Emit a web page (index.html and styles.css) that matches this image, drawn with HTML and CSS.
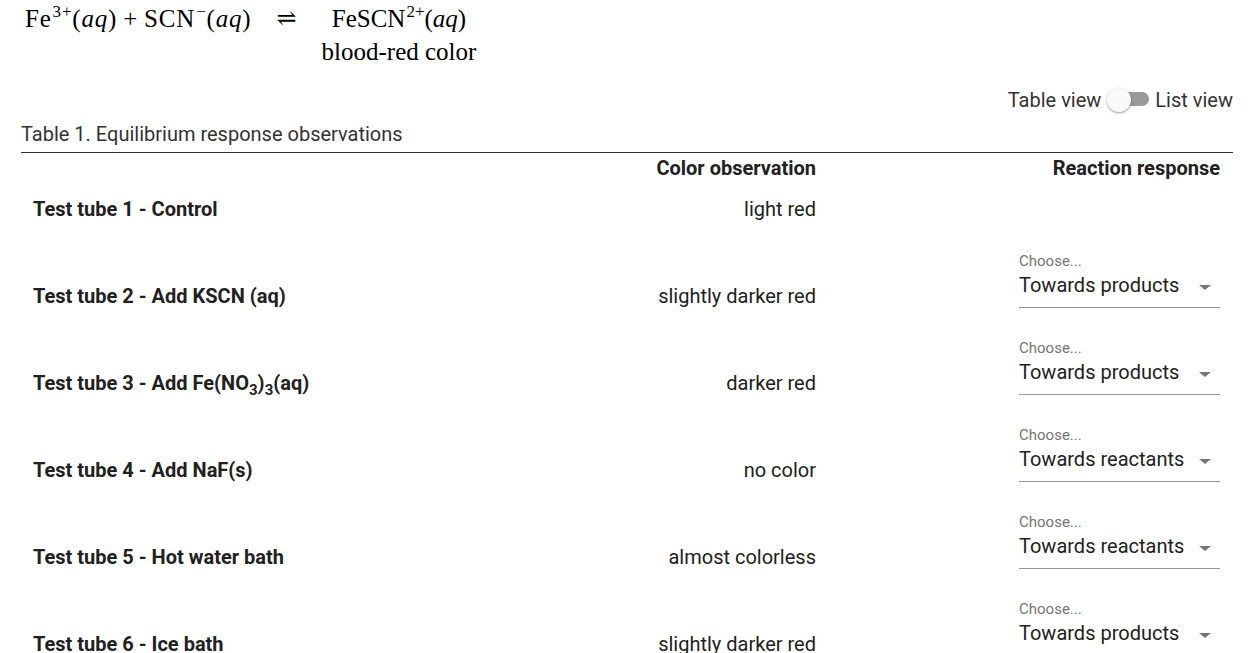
FILE: index.html
```html
<!DOCTYPE html>
<html lang="en">
<head>
<meta charset="utf-8">
<title>Equilibrium response observations</title>
<link rel="stylesheet" href="styles.css">
</head>
<body>
<div class="page">
  <div class="equation">
    <div class="eq-left">Fe<sup>3+</sup>(<i>aq</i>)<span class="op">+</span>SCN<sup>−</sup>(<i>aq</i>)</div>
    <div class="eq-arrow">⇌</div>
    <div class="eq-right">FeSCN<sup>2+</sup>(<i>aq</i>)</div>
    <div></div>
    <div></div>
    <div class="eq-right">blood-red color</div>
  </div>

  <div class="view-toggle">
    <span>Table view</span>
    <span class="switch"><span class="track"></span><span class="thumb"></span></span>
    <span>List view</span>
  </div>

  <div class="caption">Table 1. Equilibrium response observations</div>

  <div class="table">
    <div class="row head">
      <div class="cell"></div>
      <div class="cell num">Color observation</div>
      <div class="cell num">Reaction response</div>
    </div>
    <div class="row first">
      <div class="cell label">Test tube 1 - Control</div>
      <div class="cell num">light red</div>
      <div class="cell"></div>
    </div>
    <div class="row">
      <div class="cell label">Test tube 2 - Add KSCN (aq)</div>
      <div class="cell num">slightly darker red</div>
      <div class="cell sel-cell">
        <div class="select"><div class="sel-label">Choose...</div><div class="sel-value">Towards products<span class="caret"></span></div></div>
      </div>
    </div>
    <div class="row">
      <div class="cell label">Test tube 3 - Add Fe(NO<sub>3</sub>)<sub>3</sub>(aq)</div>
      <div class="cell num">darker red</div>
      <div class="cell sel-cell">
        <div class="select"><div class="sel-label">Choose...</div><div class="sel-value">Towards products<span class="caret"></span></div></div>
      </div>
    </div>
    <div class="row">
      <div class="cell label">Test tube 4 - Add NaF(s)</div>
      <div class="cell num">no color</div>
      <div class="cell sel-cell">
        <div class="select"><div class="sel-label">Choose...</div><div class="sel-value">Towards reactants<span class="caret"></span></div></div>
      </div>
    </div>
    <div class="row">
      <div class="cell label">Test tube 5 - Hot water bath</div>
      <div class="cell num">almost colorless</div>
      <div class="cell sel-cell">
        <div class="select"><div class="sel-label">Choose...</div><div class="sel-value">Towards reactants<span class="caret"></span></div></div>
      </div>
    </div>
    <div class="row">
      <div class="cell label">Test tube 6 - Ice bath</div>
      <div class="cell num">slightly darker red</div>
      <div class="cell sel-cell">
        <div class="select"><div class="sel-label">Choose...</div><div class="sel-value">Towards products<span class="caret"></span></div></div>
      </div>
    </div>
  </div>
</div>
</body>
</html>
```
FILE: styles.css
```css
html, body {
  margin: 0;
  background: #fff;
}
body {
  font-family: Roboto, "Liberation Sans", sans-serif;
  color: #212121;
  font-size: 20px;
  overflow: hidden;
}
.page {
  padding: 0 18px 0 21px;
}

/* equation */
.equation {
  display: grid;
  grid-template-columns: auto auto auto;
  justify-content: start;
  column-gap: 25px;
  font-family: "Liberation Serif", "DejaVu Serif", serif;
  font-size: 25px;
  line-height: 33px;
  padding: 2px 0 0 4px;
  color: #000;
}
.equation sup {
  font-size: 17px;
  vertical-align: 10px;
  line-height: 0;
  margin-left: 1px;
}
.equation i { font-style: italic; }
.eq-left { letter-spacing: 0.8px; }
.eq-left .op { margin: 0 6px; }
.eq-right { text-align: center; }
.eq-arrow { font-family: "DejaVu Serif", serif; font-size: 24px; }

/* toggle */
.view-toggle {
  display: flex;
  justify-content: flex-end;
  align-items: center;
  margin-top: 18px;
  height: 28px;
  color: #333;
}
.switch {
  position: relative;
  width: 42px;
  height: 24px;
  margin: 0 6px;
}
.track {
  position: absolute;
  left: 1px;
  top: 4px;
  width: 41px;
  height: 14px;
  border-radius: 7px;
  background: #9a9a9a;
}
.thumb {
  position: absolute;
  left: 0;
  top: 0;
  width: 24px;
  height: 24px;
  border-radius: 50%;
  background: #fafafa;
  box-shadow: 0 1px 3px rgba(0,0,0,0.3), 0 1px 1px rgba(0,0,0,0.14);
}

/* caption */
.caption {
  font-size: 20px;
  color: #333;
  margin-top: 8px;
  padding-bottom: 6px;
  border-bottom: 1px solid #333;
  line-height: 24px;
}

/* table */
.row {
  display: grid;
  grid-template-columns: 1fr 229px 404px;
  align-items: end;
  height: 87px;
  box-sizing: border-box;
  padding-bottom: 12px;
}
.row.head {
  height: auto;
  padding: 3px 0 0;
  font-weight: 700;
}
.row.first {
  height: 53px;
}
.cell {
  padding: 0 13px 0 12px;
  line-height: 24px;
}
.cell.num { text-align: right; }
.label { font-weight: 700; }
.label sub {
  font-size: 15px;
  line-height: 0;
  vertical-align: -5px;
}
.sel-cell {
  display: flex;
  justify-content: flex-end;
}
.select {
  width: 201px;
  border-bottom: 1px solid #949494;
}
.sel-label {
  font-size: 15px;
  line-height: 18px;
  margin-bottom: 1px;
  color: #757575;
}
.sel-value {
  position: relative;
  font-size: 20px;
  line-height: 28px;
  padding-bottom: 8px;
  color: #212121;
}
.caret {
  position: absolute;
  right: 9px;
  top: 14px;
  width: 0;
  height: 0;
  border-left: 6px solid transparent;
  border-right: 6px solid transparent;
  border-top: 5px solid #757575;
}
```
